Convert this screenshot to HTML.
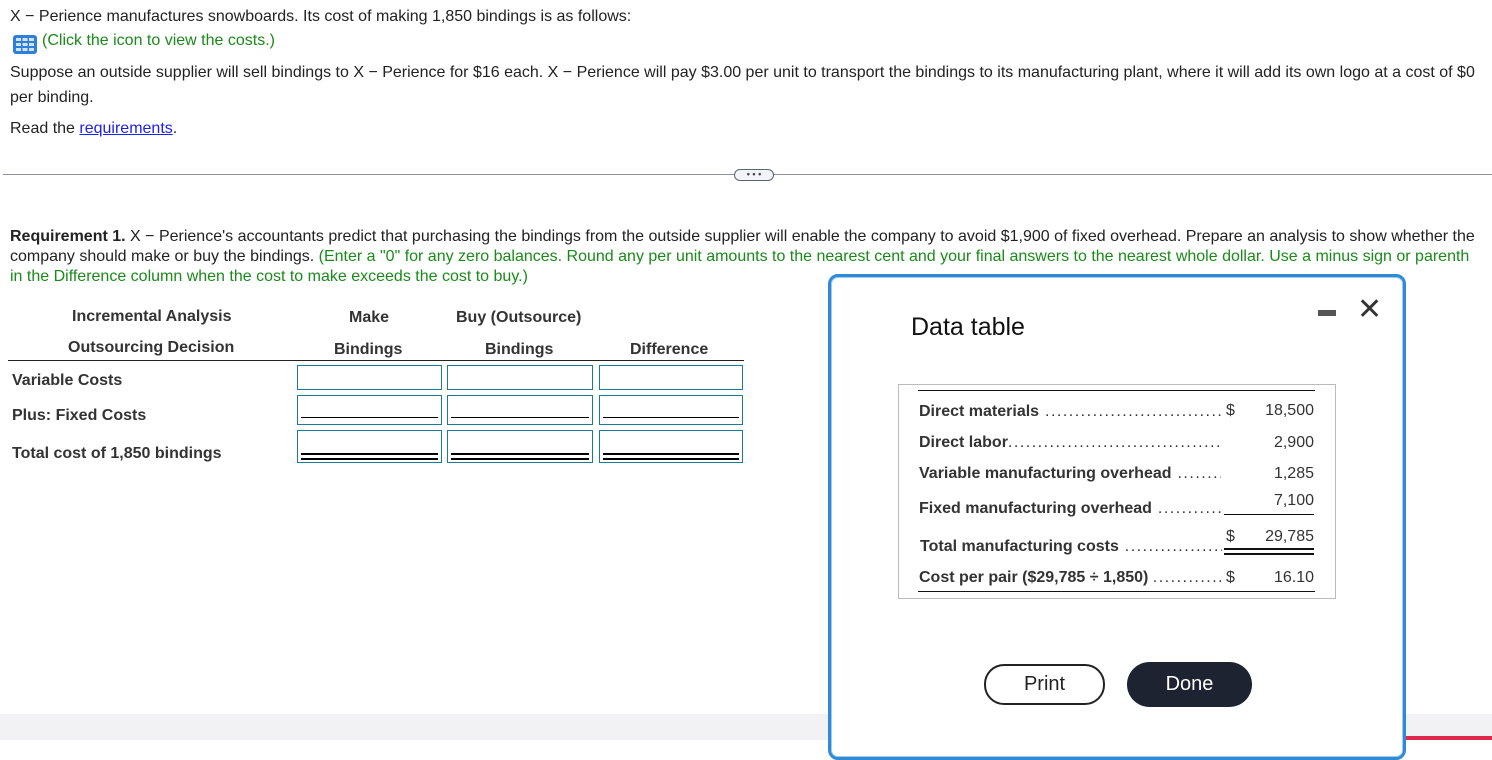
<!DOCTYPE html>
<html><head><style>
body{margin:0;width:1492px;height:740px;overflow:hidden;background:#fff;font-family:"Liberation Sans",Arial,sans-serif;color:#222;position:relative}
.a{position:absolute;white-space:nowrap}
.t{font-size:16px}
.g{color:#1a8a1a}
.b{font-weight:bold;font-size:16px;color:#333}
.inp{position:absolute;width:145px;border:1px solid #1a7a9a;background:#fff;box-sizing:border-box}
.dt{font-weight:bold;font-size:16px;color:#333;width:302px;overflow:hidden}
.dt span{font-weight:normal;letter-spacing:1.5px}
.num{position:absolute;font-size:16px;color:#333;text-align:right;width:70px}
</style></head><body>
<div class="a t" style="left:10px;top:8px">X − Perience manufactures snowboards. Its cost of making 1,850 bindings is as follows:</div>
<svg class="a" style="left:13px;top:35px" width="24" height="19" viewBox="0 0 24 19"><rect width="24" height="19" rx="3" fill="#2f7fd8"/><g fill="#cfe3ff"><rect x="3" y="3" width="5" height="3"/><rect x="9.5" y="3" width="5" height="3"/><rect x="16" y="3" width="5" height="3"/><rect x="3" y="8" width="5" height="3"/><rect x="9.5" y="8" width="5" height="3"/><rect x="16" y="8" width="5" height="3"/><rect x="3" y="13" width="5" height="3"/><rect x="9.5" y="13" width="5" height="3"/><rect x="16" y="13" width="5" height="3"/></g></svg>
<div class="a t g" style="left:42px;top:32px">(Click the icon to view the costs.)</div>
<div class="a t" style="left:10px;top:64px">Suppose an outside supplier will sell bindings to X − Perience for $16 each. X − Perience will pay $3.00 per unit to transport the bindings to its manufacturing plant, where it will add its own logo at a cost of $0</div>
<div class="a t" style="left:10px;top:89px">per binding.</div>
<div class="a t" style="left:10px;top:120px">Read the <span style="color:#2020ee;text-decoration:underline">requirements</span>.</div>
<div class="a" style="left:3px;top:174px;width:1489px;height:1px;background:#8a93a3"></div>
<div class="a" style="left:734px;top:169px;width:38px;height:10px;border:1px solid #5a6578;border-radius:6px;background:#f2f4f7;font-size:9px;line-height:9px;text-align:center;color:#445;font-weight:bold">• • •</div>
<div class="a t" style="left:10px;top:228px"><b>Requirement 1.</b> X − Perience's accountants predict that purchasing the bindings from the outside supplier will enable the company to avoid $1,900 of fixed overhead. Prepare an analysis to show whether the</div>
<div class="a t" style="left:10px;top:248px">company should make or buy the bindings. <span class="g">(Enter a "0" for any zero balances. Round any per unit amounts to the nearest cent and your final answers to the nearest whole dollar. Use a minus sign or parenth</span></div>
<div class="a t g" style="left:10px;top:268px">in the Difference column when the cost to make exceeds the cost to buy.)</div>
<div class="a b" style="left:72px;top:308px">Incremental Analysis</div>
<div class="a b" style="left:68px;top:339px">Outsourcing Decision</div>
<div class="a b" style="left:349px;top:309px">Make</div>
<div class="a b" style="left:456px;top:309px">Buy (Outsource)</div>
<div class="a b" style="left:334px;top:341px">Bindings</div>
<div class="a b" style="left:485px;top:341px">Bindings</div>
<div class="a b" style="left:630px;top:341px">Difference</div>
<div class="a" style="left:8px;top:360px;width:736px;height:1px;background:#222"></div>
<div class="a b" style="left:12px;top:372px">Variable Costs</div>
<div class="a b" style="left:12px;top:407px">Plus: Fixed Costs</div>
<div class="a b" style="left:12px;top:445px">Total cost of 1,850 bindings</div>
<div class="inp" style="left:297px;top:365px;height:25px"></div><div class="inp" style="left:447px;top:365px;height:25px;width:146px"></div><div class="inp" style="left:599px;top:365px;height:25px;width:144px"></div>
<div class="inp" style="left:297px;top:395px;height:30px"><div style="position:absolute;left:3px;right:3px;top:21px;border-top:1px solid #000"></div></div>
<div class="inp" style="left:447px;top:395px;height:30px;width:146px"><div style="position:absolute;left:3px;right:3px;top:21px;border-top:1px solid #000"></div></div>
<div class="inp" style="left:599px;top:395px;height:30px;width:144px"><div style="position:absolute;left:3px;right:3px;top:21px;border-top:1px solid #000"></div></div>
<div class="inp" style="left:297px;top:430px;height:33px"><div style="position:absolute;left:3px;right:3px;top:22px;height:3px;border-top:2px solid #000;border-bottom:2px solid #000"></div></div>
<div class="inp" style="left:447px;top:430px;height:33px;width:146px"><div style="position:absolute;left:3px;right:3px;top:22px;height:3px;border-top:2px solid #000;border-bottom:2px solid #000"></div></div>
<div class="inp" style="left:599px;top:430px;height:33px;width:144px"><div style="position:absolute;left:3px;right:3px;top:22px;height:3px;border-top:2px solid #000;border-bottom:2px solid #000"></div></div>
<div class="a" style="left:0;top:714px;width:1492px;height:26px;background:#f2f2f4"></div>
<div class="a" style="left:1404px;top:736px;width:88px;height:4px;background:#e0284a"></div>
<div class="a" style="left:828px;top:274px;width:572px;height:480px;border:3px solid #2f8bd6;border-radius:10px;background:#fff;box-shadow:inset 0 0 0 1px #9fcbef"></div>
<div class="a" style="left:911px;top:313px;font-size:25px;color:#111">Data table</div>
<div class="a" style="left:1318px;top:310px;width:18px;height:6px;background:#555"></div>
<div class="a" style="left:1357px;top:292px;font-size:30px;color:#333">✕</div>
<div class="a" style="left:898px;top:384px;width:436px;height:213px;border:1px solid #bbb"></div>
<div class="a" style="left:918px;top:390px;width:397px;height:1px;background:#111"></div>
<div class="a dt" style="left:919px;top:403px">Direct materials<span> ..........................................</span></div>
<div class="a dt" style="left:919px;top:434px">Direct labor<span>..........................................</span></div>
<div class="a dt" style="left:919px;top:465px">Variable manufacturing overhead<span> ..........................</span></div>
<div class="a dt" style="left:919px;top:500px">Fixed manufacturing overhead<span> ..........................</span></div>
<div class="a dt" style="left:920px;top:538px">Total manufacturing costs<span> ..........................</span></div>
<div class="a dt" style="left:919px;top:569px">Cost per pair ($29,785 ÷ 1,850) <span> ..........................</span></div>
<div class="a t" style="left:1226px;top:402px;color:#333">$</div>
<div class="a t" style="left:1226px;top:528px;color:#333">$</div>
<div class="a t" style="left:1226px;top:569px;color:#333">$</div>
<div class="num" style="left:1244px;top:402px">18,500</div>
<div class="num" style="left:1244px;top:434px">2,900</div>
<div class="num" style="left:1244px;top:465px">1,285</div>
<div class="num" style="left:1244px;top:492px">7,100</div>
<div class="num" style="left:1244px;top:528px">29,785</div>
<div class="num" style="left:1244px;top:569px">16.10</div>
<div class="a" style="left:1224px;top:514px;width:90px;height:1px;background:#111"></div>
<div class="a" style="left:1224px;top:548px;width:90px;height:3px;border-top:2px solid #111;border-bottom:2px solid #111"></div>
<div class="a" style="left:918px;top:591px;width:397px;height:1px;background:#111"></div>
<div class="a" style="left:984px;top:664px;width:117px;height:37px;border:2px solid #222;border-radius:20px;text-align:center;line-height:37px;font-size:20px;color:#222">Print</div>
<div class="a" style="left:1127px;top:662px;height:45px;background:#1d2330;border-radius:23px;text-align:center;line-height:45px;font-size:20px;color:#fff;width:125px">Done</div>
</body></html>
